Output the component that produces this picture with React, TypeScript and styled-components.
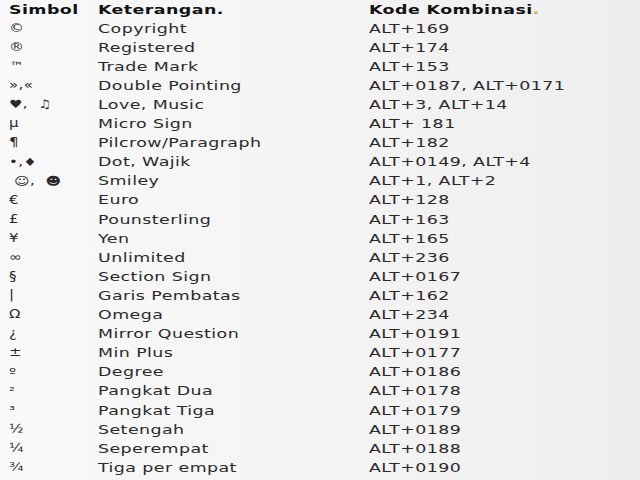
import React from "react";
import styled, { createGlobalStyle } from "styled-components";

const GlobalStyle = createGlobalStyle`
  html, body {
    margin: 0;
    padding: 0;
  }
  body {
    width: 640px;
    height: 480px;
    overflow: hidden;
    background: linear-gradient(to right, #f9f9f9 0%, #f3f3f3 60%, #eeeeee 100%);
    font-family: "DejaVu Sans", Verdana, sans-serif;
  }
`;

const Table = styled.div`
  display: grid;
  grid-template-columns: 89px 271px 1fr;
  grid-auto-rows: 19.1px;
  padding-left: 9px;
`;

const Cell = styled.div<{ $indent?: number }>`
  display: flex;
  align-items: center;
  white-space: nowrap;
  padding-left: ${(p) => p.$indent ?? 0}px;
`;

const Text = styled.span<{ $head?: boolean }>`
  display: inline-block;
  transform: scaleX(1.45);
  transform-origin: left center;
  font-size: 12px;
  font-weight: ${(p) => (p.$head ? 700 : 400)};
  letter-spacing: 0.3px;
  line-height: 1;
  color: ${(p) => (p.$head ? "#111111" : "#2a2a2a")};
`;

const Sym = styled(Text)`
  white-space: pre;
  font-size: 11.5px;
  transform: scaleX(1.3);
`;

const Dot = styled.span`
  color: #f0a040;
`;

type Row = { sym: string; desc: string; code: string; indent?: number };

const rows: Row[] = [
  { sym: "©", desc: "Copyright", code: "ALT+169" },
  { sym: "®", desc: "Registered", code: "ALT+174" },
  { sym: "™", desc: "Trade Mark", code: "ALT+153" },
  { sym: "»,«", desc: "Double Pointing", code: "ALT+0187, ALT+0171" },
  { sym: "♥,  ♫", desc: "Love, Music", code: "ALT+3, ALT+14" },
  { sym: "µ", desc: "Micro Sign", code: "ALT+ 181" },
  { sym: "¶", desc: "Pilcrow/Paragraph", code: "ALT+182" },
  { sym: "•,♦", desc: "Dot, Wajik", code: "ALT+0149, ALT+4" },
  { sym: "☺,  ☻", desc: "Smiley", code: "ALT+1, ALT+2", indent: 5 },
  { sym: "€", desc: "Euro", code: "ALT+128" },
  { sym: "£", desc: "Pounsterling", code: "ALT+163" },
  { sym: "¥", desc: "Yen", code: "ALT+165" },
  { sym: "∞", desc: "Unlimited", code: "ALT+236" },
  { sym: "§", desc: "Section Sign", code: "ALT+0167" },
  { sym: "|", desc: "Garis Pembatas", code: "ALT+162" },
  { sym: "Ω", desc: "Omega", code: "ALT+234" },
  { sym: "¿", desc: "Mirror Question", code: "ALT+0191" },
  { sym: "±", desc: "Min Plus", code: "ALT+0177" },
  { sym: "º", desc: "Degree", code: "ALT+0186" },
  { sym: "²", desc: "Pangkat Dua", code: "ALT+0178" },
  { sym: "³", desc: "Pangkat Tiga", code: "ALT+0179" },
  { sym: "½", desc: "Setengah", code: "ALT+0189" },
  { sym: "¼", desc: "Seperempat", code: "ALT+0188" },
  { sym: "¾", desc: "Tiga per empat", code: "ALT+0190" },
];

const App: React.FC = () => {
  return (
    <>
      <GlobalStyle />
      <Table>
        <Cell>
          <Text $head>Simbol</Text>
        </Cell>
        <Cell>
          <Text $head>Keterangan.</Text>
        </Cell>
        <Cell>
          <Text $head>
            Kode Kombinasi<Dot>.</Dot>
          </Text>
        </Cell>
        {rows.map((r) => (
          <React.Fragment key={r.desc}>
            <Cell $indent={r.indent}>
              <Sym>{r.sym}</Sym>
            </Cell>
            <Cell>
              <Text>{r.desc}</Text>
            </Cell>
            <Cell>
              <Text>{r.code}</Text>
            </Cell>
          </React.Fragment>
        ))}
      </Table>
    </>
  );
};

export default App;
